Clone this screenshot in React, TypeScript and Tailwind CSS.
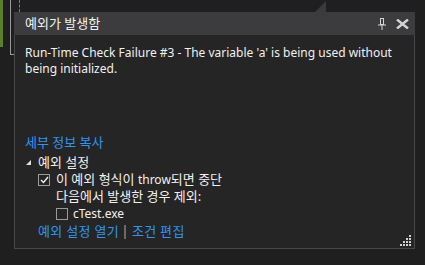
import React from 'react';

const font = { fontFamily: '"Noto Sans", "Noto Sans CJK KR", sans-serif' };

function PinIcon() {
  return (
    <svg width="8" height="12" viewBox="0 0 8 12" className="block">
      <rect x="2.5" y="0.5" width="3" height="6" fill="none" stroke="#d4d4d4" strokeWidth="1" />
      <rect x="0" y="6.5" width="8" height="1" fill="#d4d4d4" />
      <rect x="3.5" y="7" width="1" height="5" fill="#d4d4d4" />
    </svg>
  );
}

function CloseIcon() {
  return (
    <svg width="13" height="10" viewBox="0 0 13 10" className="block">
      <path d="M1 0.5 L12 9.5 M12 0.5 L1 9.5" stroke="#d4d4d4" strokeWidth="2.4" />
    </svg>
  );
}

function Grip() {
  const dots: [number, number][] = [];
  for (let r = 0; r < 4; r++) {
    for (let c = 3 - r; c < 4; c++) dots.push([c * 3, r * 3]);
  }
  return (
    <svg width="11" height="11" viewBox="0 0 11 11" className="block">
      {dots.map(([x, y], i) => (
        <rect key={i} x={x} y={y} width="2" height="2" fill="#d0d0d0" />
      ))}
    </svg>
  );
}

function CheckBox({ checked }: { checked?: boolean }) {
  return (
    <span className="flex h-[12px] w-[12px] shrink-0 items-center justify-center border border-[#9a9a9a] bg-[#252526]">
      {checked && (
        <svg width="9" height="8" viewBox="0 0 9 8">
          <path d="M1 4 L3.5 6.5 L8 1" fill="none" stroke="#f1f1f1" strokeWidth="1.4" />
        </svg>
      )}
    </span>
  );
}

export default function App() {
  return (
    <div className="relative h-[265px] w-[425px] overflow-hidden bg-[#1f1f1f] text-[13px] text-[#f1f1f1]" style={font}>
      {/* editor behind */}
      <div className="absolute left-0 top-0 h-[47px] w-[3px] bg-[#5b7f2b]" />
      <div className="absolute left-[10px] top-0 h-[55px] w-[5px] border-b border-l border-[#9a9a9a]" />
      <div className="absolute left-[19px] top-0 h-[12px] border-l border-dashed border-[#7a7a7a]" />

      {/* notch */}
      <svg className="absolute left-[314px] top-0" width="13" height="13" viewBox="0 0 13 13">
        <path d="M0 13 L12 1 L12 13 Z" fill="#3a3a3c" />
      </svg>

      {/* popup */}
      <div className="absolute left-[14px] top-[12px] flex h-[237px] w-[401px] flex-col">
        <div className="flex h-[23px] items-center bg-[#3c3c3e] pl-[11px] pr-[6px]">
          <span className="flex-1">예외가 발생함</span>
          <PinIcon />
          <span className="ml-[10px]">
            <CloseIcon />
          </span>
        </div>
        <div className="relative flex flex-1 flex-col border-x border-b border-[#48484c] bg-[#252526] pl-[10px] pt-[10px]">
          <div className="text-[12px] leading-[16px]">
            Run-Time Check Failure #3 - The variable 'a' is being used without
            <br />
            being initialized.
          </div>
          <div className="mt-[57px] leading-[17px] text-[#3294f0]">세부 정보 복사</div>
          <div className="mt-[3px] flex h-[17px] items-center">
            <svg width="5" height="5" viewBox="0 0 5 5" className="ml-[1px] mr-[7px] block">
              <path d="M0 5 L5 5 L5 0 Z" fill="#e0e0e0" />
            </svg>
            <span>예외 설정</span>
          </div>
          <div className="flex h-[17px] items-center pl-[13px]">
            <CheckBox checked />
            <span className="ml-[6px]">
              이 예외 형식이 <span className="text-[12px]">throw</span>되면 중단
            </span>
          </div>
          <div className="flex h-[17px] items-center pl-[31px]">다음에서 발생한 경우 제외:</div>
          <div className="flex h-[17px] items-center pl-[31px]">
            <CheckBox />
            <span className="ml-[5px] text-[12px]">cTest.exe</span>
          </div>
          <div className="mt-[1px] flex h-[17px] items-center pl-[13px] text-[#3294f0]">
            <span className="tracking-[0.3px]">예외 설정 열기</span>
            <span className="ml-[5px] mr-[6px] h-[14px] w-[2px] bg-[#6a6a6a]" />
            <span className="tracking-[0.3px]">조건 편집</span>
          </div>
          <div className="absolute bottom-[2px] right-[3px]">
            <Grip />
          </div>
        </div>
      </div>
    </div>
  );
}
